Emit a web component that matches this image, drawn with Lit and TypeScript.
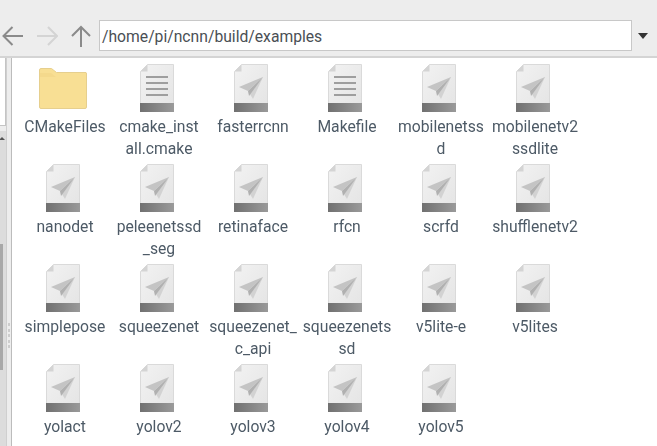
import { LitElement, html, css, svg } from "lit";
import { customElement } from "lit/decorators.js";

const docIcon = (kind: string) => html`<svg class="icon" width="34" height="48" viewBox="0 0 34 48">
  <defs>
    <linearGradient id="b" x1="0" x2="1" y1="0" y2="0"><stop offset="0" stop-color="#707070"/><stop offset="1" stop-color="#9a9a9a"/></linearGradient>
    <linearGradient id="p" x1="0" x2="1" y1="0" y2="1"><stop offset="0" stop-color="#f2f2f2"/><stop offset="1" stop-color="#e4e4e4"/></linearGradient>
  </defs>
  <path d="M7.5 0.5H33.5V47.5H0.5V7.5Z" fill="url(#p)" stroke="#dadada"/>
  <path d="M7.5 0.5V7.5H0.5Z" fill="#d4d4d4"/>
  <rect x="0" y="39" width="34" height="9" fill="url(#b)"/>
  ${kind === "text"
    ? svg`<g fill="#9e9e9e"><rect x="6" y="12" width="22" height="2"/><rect x="6" y="18" width="22" height="2"/><rect x="6" y="24" width="22" height="2"/><rect x="6" y="30" width="22" height="2"/></g>`
    : svg`<path d="M29 13L5 23L14 27Z" fill="#c4c4c4"/><path d="M29 13L14 27L19 35Z" fill="#d2d2d2"/><path d="M29 13L14 27L15 32Z" fill="#b0b0b0"/>`}
</svg>`;

const folderIcon = html`<svg class="icon" width="48" height="41" viewBox="0 0 48 41">
  <path d="M0.5 2Q0.5 0.5 2 0.5H12.5L17.5 4.5H47Q47.5 4.5 47.5 6V39Q47.5 40.5 46 40.5H2Q0.5 40.5 0.5 39Z" fill="#f8df94" stroke="#e6cf8e"/>
  <path d="M1 9H17L12 5H1Z" fill="#f4d98c"/>
</svg>`;

const files: [string, string][] = [
  ["CMakeFiles", "folder"], ["cmake_inst\nall.cmake", "text"], ["fasterrcnn", "bin"], ["Makefile", "text"], ["mobilenetss\nd", "bin"], ["mobilenetv2\nssdlite", "bin"],
  ["nanodet", "bin"], ["peleenetssd\n_seg", "bin"], ["retinaface", "bin"], ["rfcn", "bin"], ["scrfd", "bin"], ["shufflenetv2", "bin"],
  ["simplepose", "bin"], ["squeezenet", "bin"], ["squeezenet_\nc_api", "bin"], ["squeezenets\nsd", "bin"], ["v5lite-e", "bin"], ["v5lites", "bin"],
  ["yolact", "bin"], ["yolov2", "bin"], ["yolov3", "bin"], ["yolov4", "bin"], ["yolov5", "bin"],
];

@customElement("app-root")
export class AppRoot extends LitElement {
  static styles = css`
    :host { display: block; width: 657px; height: 446px; overflow: hidden; background: #ededed; font-family: Roboto, sans-serif; }
    .toolbar { height: 58px; display: flex; align-items: flex-start; padding-top: 20px; box-sizing: border-box; border-bottom: 2px solid #d4d4d4; }
    .nav { width: 99px; display: flex; flex: none; }
    .nav svg { flex: none; }
    .path { flex: none; width: 533px; height: 31px; box-sizing: border-box; background: #fff; border: 1px solid #c8c8c8; font-size: 15.7px; line-height: 29px; padding: 1px 0 0 2px; color: #4a4f55; }
    .drop { margin-left: 6px; margin-top: 13px; width: 0; height: 0; border-left: 5px solid transparent; border-right: 5px solid transparent; border-top: 6px solid #333; }
    .body { display: flex; height: 388px; }
    .pane { flex: none; width: 6px; display: flex; flex-direction: column; }
    .list { height: 68px; flex: none; box-sizing: border-box; background: #fff; border-right: 1px solid #c4c4c4; border-bottom: 1px solid #c4c4c4; }
    .sb { flex: 1; margin-top: 5px; background: #dcdcdc; padding-top: 6px; }
    .arrow { width: 0; height: 0; border-left: 3px solid transparent; border-right: 3px solid transparent; border-bottom: 3px solid #555; margin-left: -1px; }
    .thumb { width: 3px; height: 126px; margin-top: 104px; background: #a8a8a8; }
    .rail { flex: none; width: 6px; box-sizing: border-box; border-right: 1px solid #bcbcbc; border-left: 1px solid #cfcfcf; padding-top: 265px; }
    .dot { width: 2px; height: 3px; margin: 0 auto 2.5px; background: #cdcdcd; }
    .main { flex: 1; background: #fff; display: grid; grid-template-columns: repeat(6, 94px); grid-auto-rows: 100px; padding: 6px 0 0 6px; align-content: start; }
    .item { display: flex; flex-direction: column; align-items: center; }
    .iconbox { height: 48px; display: flex; justify-content: center; align-items: flex-end; padding-right: 4px; }
    .iconbox.folder { height: 45px; margin-bottom: 3px; }
    .icon { display: block; filter: blur(0.4px); }
    .label { margin-top: 4px; font-size: 15.7px; line-height: 22px; text-align: center; white-space: pre; color: #4d5a66; filter: blur(0.25px); }
  `;

  render() {
    return html`
      <div class="toolbar">
        <div class="nav">
          <svg width="24" height="30" viewBox="0 0 24 30" fill="none" stroke="#8a8a8a" stroke-width="2"><path d="M4 16H23M12.5 7L3.5 16L12.5 25"/></svg>
          <svg width="34" height="30" viewBox="0 0 34 30" fill="none" stroke="#d4d4d4" stroke-width="2"><path d="M13 16H33M24 7L33 16L24 25"/></svg>
          <svg width="34" height="30" viewBox="0 0 34 30" fill="none" stroke="#8a8a8a" stroke-width="2"><path d="M23 8V27M14 16L23 7L32 16"/></svg>
        </div>
        <div class="path">/home/pi/ncnn/build/examples</div>
        <div class="drop"></div>
      </div>
      <div class="body">
        <div class="pane">
          <div class="list"></div>
          <div class="sb"><div class="arrow"></div><div class="thumb"></div></div>
        </div>
        <div class="rail">${[0, 1, 2, 3, 4].map(() => html`<div class="dot"></div>`)}</div>
        <div class="main">
          ${files.map(([n, k]) => html`<div class="item"><div class="iconbox ${k === "folder" ? "folder" : ""}">${k === "folder" ? folderIcon : docIcon(k)}</div><div class="label">${n}</div></div>`)}
        </div>
      </div>`;
  }
}
